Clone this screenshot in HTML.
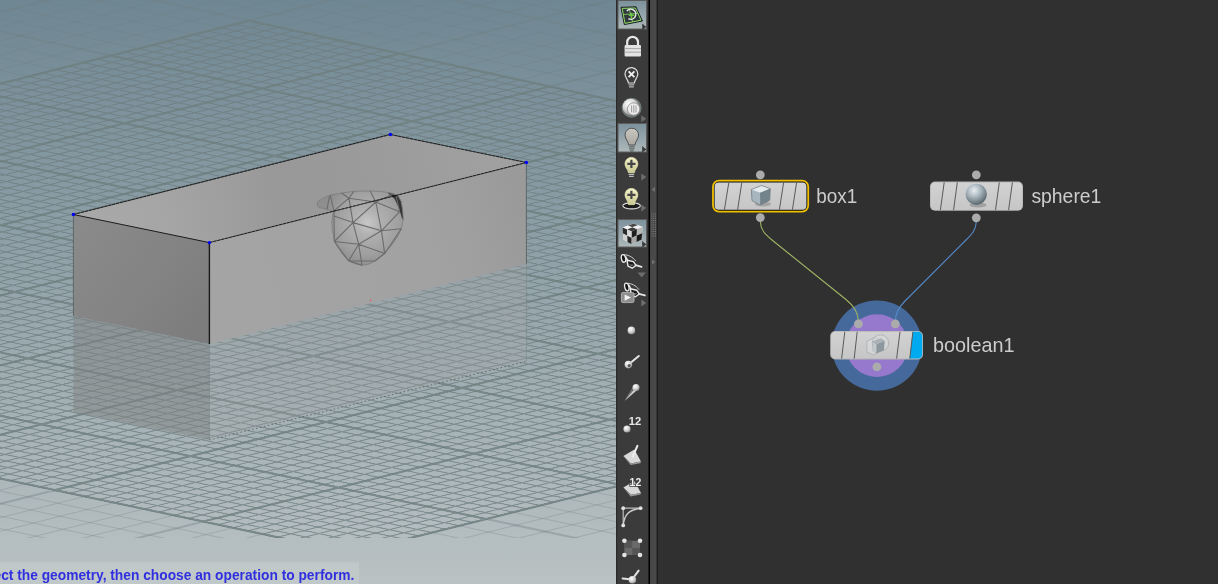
<!DOCTYPE html>
<html><head><meta charset="utf-8"><title>Houdini</title>
<style>
html,body{margin:0;padding:0;background:#303030;}
body{width:1218px;height:584px;overflow:hidden;position:relative;font-family:"Liberation Sans",sans-serif;}
svg{position:absolute;left:0;top:0;display:block}
text{font-family:"Liberation Sans",sans-serif;}
</style></head><body>
<svg width="1218" height="584" viewBox="0 0 1218 584">
<defs>
<linearGradient id="bg" x1="0" y1="0" x2="0" y2="1"><stop offset="0" stop-color="#6f8793"/><stop offset="1" stop-color="#bac2c3"/></linearGradient>
<filter id="idf" x="-0.05" y="-0.2" width="1.1" height="1.4"><feOffset dx="0" dy="0"/></filter>
<clipPath id="vp"><rect x="0" y="0" width="616" height="584"/></clipPath>
<clipPath id="gclip"><rect x="0" y="0" width="616" height="538"/></clipPath>
<clipPath id="outer" clip-rule="evenodd"><path clip-rule="evenodd" d="M0 0H616V538H0Z M-848.3 298.7L248.9 20.7L1437.3 280.8L351.2 552.8"/></clipPath>
<linearGradient id="fadeb" x1="0" y1="500" x2="0" y2="538" gradientUnits="userSpaceOnUse"><stop offset="0" stop-color="#fff"/><stop offset="1" stop-color="#000"/></linearGradient>
<linearGradient id="btn" x1="0" y1="0" x2="0" y2="1"><stop offset="0" stop-color="#7b919c"/><stop offset="1" stop-color="#aeb8ba"/></linearGradient>
<linearGradient id="topf" x1="73" y1="215" x2="480" y2="112" gradientUnits="userSpaceOnUse"><stop offset="0" stop-color="#a9a9a9"/><stop offset="0.22" stop-color="#a5a5a5"/><stop offset="0.5" stop-color="#989898"/><stop offset="0.72" stop-color="#9b9b9b"/><stop offset="1" stop-color="#a0a0a0"/></linearGradient>
<linearGradient id="leftf" x1="73" y1="230" x2="209" y2="330" gradientUnits="userSpaceOnUse"><stop offset="0" stop-color="#8a8a8a"/><stop offset="0.5" stop-color="#848484"/><stop offset="1" stop-color="#7c7c7c"/></linearGradient>
<linearGradient id="rightf" x1="209" y1="300" x2="526" y2="220" gradientUnits="userSpaceOnUse"><stop offset="0" stop-color="#a4a4a4"/><stop offset="0.7" stop-color="#a2a2a2"/><stop offset="1" stop-color="#9a9a9a"/></linearGradient>
<radialGradient id="sph" cx="367.5" cy="222.5" r="44" gradientUnits="userSpaceOnUse"><stop offset="0" stop-color="#c8c8c8"/><stop offset="0.3" stop-color="#b0b0b0"/><stop offset="0.7" stop-color="#a0a0a0"/><stop offset="1" stop-color="#8e8e8e"/></radialGradient>
</defs>

<g clip-path="url(#vp)">
<rect x="0" y="0" width="616" height="584" fill="url(#bg)"/>
<g clip-path="url(#gclip)"><g clip-path="url(#outer)" fill="none" stroke="#6f7f80">
<path stroke-opacity="0.3" stroke-width="1" d="M-4941.3 323.9L827.8 1479.7M-4935.7 337.5L377.2 -1038.2M-4914.1 316.8L853.8 1473.3M-4902.9 344L408.6 -1030.8M-4886.9 309.8L879.8 1467M-4870.2 350.6L440 -1023.5M-4859.7 302.8L905.8 1460.6M-4837.5 357.2L471.4 -1016.1M-4805.3 288.7L957.7 1447.9M-4772.1 370.2L534 -1001.5M-4778.1 281.6L983.7 1441.5M-4739.5 376.8L565.3 -994.1M-4750.9 274.5L1009.7 1435.2M-4706.9 383.3L596.6 -986.8M-4723.6 267.5L1035.7 1428.8M-4674.3 389.8L627.8 -979.5M-4669.1 253.4L1087.8 1416M-4609.2 402.8L690.2 -964.9M-4641.8 246.3L1113.8 1409.7M-4576.7 409.3L721.3 -957.6M-4614.6 239.2L1139.8 1403.3M-4544.2 415.8L752.4 -950.4M-4587.3 232.2L1165.9 1396.9M-4511.8 422.3L783.5 -943.1M-4532.7 218L1218 1384.2M-4447 435.3L845.6 -928.5M-4505.4 211L1244.1 1377.8M-4414.6 441.8L876.6 -921.3M-4478.1 203.9L1270.1 1371.4M-4382.3 448.3L907.6 -914M-4450.7 196.8L1296.2 1365M-4350 454.7L938.6 -906.8M-4396.1 182.7L1348.4 1352.2M-4285.4 467.7L1000.4 -892.3M-4368.7 175.6L1374.5 1345.8M-4253.2 474.1L1031.3 -885.1M-4341.4 168.5L1400.6 1339.4M-4221 480.5L1062.2 -877.9M-4314 161.4L1426.8 1333.1M-4188.8 487L1093 -870.7M-4259.2 147.2L1479 1320.3M-4124.6 499.9L1154.5 -856.3M-4231.9 140.1L1505.2 1313.9M-4092.5 506.3L1185.3 -849.1M-4204.5 133L1531.3 1307.5M-4060.4 512.7L1216 -841.9M-4177.1 125.9L1557.5 1301M-4028.4 519.1L1246.7 -834.7M-4122.2 111.7L1609.8 1288.2M-3964.4 531.9L1308 -820.3M-4094.8 104.6L1636 1281.8M-3932.4 538.3L1338.6 -813.2M-4067.3 97.5L1662.2 1275.4M-3900.5 544.7L1369.2 -806M-4039.9 90.4L1688.3 1269M-3868.6 551.1L1399.8 -798.9M-3985 76.2L1740.8 1256.2M-3804.9 563.9L1460.8 -784.6M-3957.5 69.1L1767 1249.8M-3773.1 570.2L1491.3 -777.4M-3930 61.9L1793.2 1243.3M-3741.3 576.6L1521.8 -770.3M-3902.5 54.8L1819.4 1236.9M-3709.5 582.9L1552.2 -763.2M-3847.5 40.6L1871.9 1224.1M-3646 595.7L1613 -749M-3820 33.5L1898.1 1217.6M-3614.3 602L1643.3 -741.9M-3792.5 26.3L1924.4 1211.2M-3582.7 608.3L1673.6 -734.8M-3765 19.2L1950.7 1204.8M-3551 614.7L1703.9 -727.7M-3709.9 4.9L2003.2 1191.9M-3487.8 627.3L1764.5 -713.5M-3682.3 -2.2L2029.5 1185.5M-3456.3 633.6L1794.7 -706.5M-3654.8 -9.4L2055.8 1179M-3424.7 639.9L1824.9 -699.4M-3627.2 -16.5L2082.1 1172.6M-3393.2 646.3L1855.1 -692.3M-3572 -30.8L2134.7 1159.7M-3330.3 658.9L1915.3 -678.2M-3544.4 -37.9L2161.1 1153.3M-3298.9 665.1L1945.4 -671.2M-3516.8 -45.1L2187.4 1146.8M-3267.5 671.4L1975.5 -664.1M-3489.2 -52.2L2213.7 1140.4M-3236.1 677.7L2005.5 -657.1M-3433.9 -66.5L2266.4 1127.5M-3173.4 690.3L2065.5 -643.1M-3406.3 -73.7L2292.8 1121M-3142.1 696.5L2095.5 -636.1M-3378.7 -80.9L2319.2 1114.6M-3110.8 702.8L2125.4 -629.1M-3351 -88L2345.5 1108.1M-3079.6 709L2155.3 -622.1M-3295.7 -102.4L2398.3 1095.2M-3017.2 721.5L2215.1 -608.1M-3268 -109.5L2424.7 1088.7M-2986 727.8L2244.9 -601.1M-3240.3 -116.7L2451.1 1082.3M-2954.9 734L2274.8 -594.1M-3212.6 -123.9L2477.5 1075.8M-2923.7 740.2L2304.5 -587.1M-3157.2 -138.2L2530.4 1062.9M-2861.6 752.7L2364 -573.2M-3129.5 -145.4L2556.8 1056.4M-2830.5 758.9L2393.8 -566.3M-3101.7 -152.6L2583.2 1049.9M-2799.5 765.1L2423.4 -559.3M-3074 -159.8L2609.7 1043.4M-2768.5 771.3L2453.1 -552.4M-3018.5 -174.2L2662.6 1030.5M-2706.6 783.7L2512.3 -538.5M-2990.7 -181.3L2689.1 1024M-2675.7 789.9L2541.9 -531.6M-2962.9 -188.5L2715.6 1017.5M-2644.8 796.1L2571.5 -524.7M-2935.2 -195.7L2742.1 1011M-2614 802.2L2601 -517.8M-2879.6 -210.1L2795.1 998M-2552.3 814.6L2660 -504M-2851.8 -217.3L2821.6 991.6M-2521.5 820.8L2689.5 -497.1M-2824 -224.5L2848.1 985.1M-2490.8 826.9L2718.9 -490.2M-2796.1 -231.7L2874.6 978.6M-2460 833.1L2748.3 -483.3M-2740.5 -246.2L2927.7 965.6M-2398.6 845.4L2807.1 -469.5M-2712.6 -253.4L2954.2 959.1M-2368 851.5L2836.4 -462.7M-2684.7 -260.6L2980.8 952.6M-2337.3 857.6L2865.7 -455.8M-2656.9 -267.8L3007.3 946.1M-2306.7 863.8L2895 -449M-2601.1 -282.3L3060.5 933.1M-2245.6 876L2953.5 -435.3M-2573.2 -289.5L3087.1 926.6M-2215 882.1L2982.7 -428.4M-2545.3 -296.7L3113.7 920M-2184.5 888.2L3011.9 -421.6M-2517.4 -303.9L3140.3 913.5M-2154 894.3L3041.1 -414.8M-2461.6 -318.4L3193.5 900.5M-2093.1 906.5L3099.4 -401.1M-2433.6 -325.6L3220.1 894M-2062.7 912.6L3128.5 -394.3M-2405.7 -332.9L3246.7 887.5M-2032.3 918.7L3157.5 -387.5M-2377.8 -340.1L3273.4 880.9M-2002 924.8L3186.6 -380.7M-2321.8 -354.6L3326.7 867.9M-1941.3 936.9L3244.6 -367.2M-2293.8 -361.8L3353.3 861.4M-1911 943L3273.5 -360.4M-2265.9 -369.1L3380 854.8M-1880.8 949L3302.5 -353.6M-2237.9 -376.3L3406.7 848.3M-1850.5 955.1L3331.4 -346.8M-2181.9 -390.8L3460 835.2M-1790.1 967.2L3389.2 -333.3M-2153.8 -398.1L3486.7 828.7M-1760 973.2L3418 -326.6M-2125.8 -405.4L3513.4 822.2M-1729.8 979.2L3446.9 -319.8M-2097.8 -412.6L3540.1 815.6M-1699.7 985.3L3475.7 -313.1M-2041.7 -427.2L3593.6 802.5M-1639.6 997.3L3533.2 -299.6M-2013.6 -434.4L3620.3 796M-1609.5 1003.3L3561.9 -292.9M-1985.5 -441.7L3647.1 789.5M-1579.5 1009.3L3590.6 -286.2M-1957.5 -449L3673.8 782.9M-1549.5 1015.3L3619.3 -279.5M-1901.3 -463.5L3727.3 769.8M-1489.6 1027.3L3676.6 -266.1M-1873.2 -470.8L3754.1 763.2M-1459.7 1033.3L3705.2 -259.4M-1845.1 -478.1L3780.9 756.7M-1429.8 1039.3L3733.8 -252.7M-1816.9 -485.4L3807.7 750.1M-1399.9 1045.3L3762.4 -246M-1760.7 -499.9L3861.3 737M-1340.2 1057.2L3819.4 -232.6M-1732.5 -507.2L3888.1 730.4M-1310.4 1063.2L3847.9 -226M-1704.4 -514.5L3914.9 723.9M-1280.6 1069.2L3876.4 -219.3M-1676.2 -521.8L3941.7 717.3M-1250.9 1075.1L3904.8 -212.7M-1619.8 -536.4L3995.4 704.2M-1191.5 1087L3961.6 -199.4M-1591.7 -543.7L4022.2 697.6M-1161.8 1092.9L3990 -192.7M-1563.5 -551L4049.1 691M-1132.1 1098.9L4018.4 -186.1M-1535.2 -558.3L4075.9 684.4M-1102.5 1104.8L4046.7 -179.5M-1478.8 -572.9L4129.7 671.3M-1043.3 1116.7L4103.3 -166.2M-1450.6 -580.3L4156.6 664.7M-1013.7 1122.6L4131.5 -159.6M-1422.3 -587.6L4183.5 658.1M-984.2 1128.5L4159.8 -153M-1394.1 -594.9L4210.4 651.5M-954.7 1134.4L4188 -146.4M-1337.5 -609.5L4264.2 638.4M-895.7 1146.2L4244.3 -133.2M-1309.3 -616.9L4291.1 631.8M-866.3 1152.1L4272.5 -126.6M-1281 -624.2L4318 625.2M-836.9 1158L4300.6 -120M-1252.7 -631.5L4345 618.6M-807.5 1163.9L4328.7 -113.5M-1196.1 -646.2L4398.9 605.4M-748.7 1175.6L4384.8 -100.3M-1167.8 -653.5L4425.8 598.8M-719.4 1181.5L4412.8 -93.8M-1139.4 -660.8L4452.8 592.2M-690.1 1187.4L4440.8 -87.2M-1111.1 -668.2L4479.8 585.6M-660.8 1193.2L4468.8 -80.7M-1054.4 -682.9L4533.8 572.4M-602.4 1204.9L4524.7 -67.6M-1026 -690.2L4560.8 565.7M-573.1 1210.8L4552.6 -61.1M-997.7 -697.6L4587.8 559.1M-544 1216.6L4580.5 -54.5M-969.3 -704.9L4614.8 552.5M-514.8 1222.5L4608.3 -48M-912.5 -719.6L4668.8 539.3M-456.5 1234.1L4664 -35M-884.1 -727L4695.9 532.7M-427.5 1239.9L4691.8 -28.5M-855.7 -734.3L4722.9 526M-398.4 1245.8L4719.6 -22M-827.2 -741.7L4750 519.4M-369.3 1251.6L4747.3 -15.5M-770.4 -756.4L4804.1 506.2M-311.3 1263.2L4802.7 -2.5M-741.9 -763.8L4831.2 499.5M-282.3 1269L4830.4 3.9M-713.4 -771.2L4858.3 492.9M-253.4 1274.8L4858.1 10.4M-685 -778.6L4885.4 486.3M-224.5 1280.6L4885.7 16.9M-628 -793.3L4939.6 473M-166.7 1292.1L4940.9 29.8M-599.5 -800.7L4966.7 466.4M-137.8 1297.9L4968.5 36.3M-571 -808.1L4993.8 459.7M-109 1303.7L4996 42.7M-542.5 -815.5L5020.9 453.1M-80.2 1309.5L5023.6 49.1M-485.5 -830.2L5075.2 439.8M-22.6 1321L5078.5 62M-456.9 -837.6L5102.4 433.1M6.1 1326.7L5106 68.4M-428.4 -845L5129.5 426.5M34.9 1332.5L5133.4 74.9M-399.8 -852.4L5156.7 419.8M63.6 1338.2L5160.8 81.3M-342.7 -867.2L5211.1 406.5M120.9 1349.7L5215.6 94.1M-314.1 -874.6L5238.2 399.9M149.5 1355.4L5242.9 100.5M-285.5 -882L5265.4 393.2M178.1 1361.2L5270.3 106.9M-256.9 -889.4L5292.7 386.6M206.7 1366.9L5297.6 113.3M-199.7 -904.3L5347.1 373.2M263.8 1378.3L5352.1 126M-171 -911.7L5374.3 366.6M292.4 1384L5379.3 132.4M-142.4 -919.1L5401.6 359.9M320.9 1389.7L5406.5 138.8M-113.8 -926.5L5428.8 353.2M349.3 1395.4L5433.7 145.1M-56.5 -941.3L5483.3 339.9M406.2 1406.8L5488.1 157.8M-27.8 -948.8L5510.6 333.2M434.6 1412.5L5515.2 164.2M0.9 -956.2L5537.9 326.5M463 1418.2L5542.3 170.5M29.6 -963.6L5565.1 319.8M491.4 1423.9L5569.4 176.9M87 -978.5L5619.7 306.5M548 1435.2L5623.5 189.5M115.7 -985.9L5647.1 299.8M576.3 1440.9L5650.5 195.8M144.4 -993.4L5674.4 293.1M604.6 1446.5L5677.5 202.2M173.2 -1000.8L5701.7 286.4M632.9 1452.2L5704.4 208.5M230.7 -1015.7L5756.4 273M689.3 1463.5L5758.3 221.1M259.4 -1023.2L5783.7 266.3M717.5 1469.1L5785.2 227.4M288.2 -1030.6L5811.1 259.6M745.6 1474.8L5812.1 233.7M317 -1038.1L5838.4 252.9M773.8 1480.4L5839 240"/>
<path stroke-opacity="0.38" stroke-width="2" d="M-4968.5 330.9L801.9 1486M-4968.5 330.9L345.7 -1045.5M-4832.5 295.7L931.7 1454.2M-4804.8 363.7L502.7 -1008.8M-4696.4 260.4L1061.7 1422.4M-4641.7 396.3L659 -972.2M-4560 225.1L1191.9 1390.5M-4479.4 428.8L814.6 -935.8M-4423.4 189.7L1322.3 1358.6M-4317.7 461.2L969.5 -899.6M-4286.6 154.3L1452.9 1326.7M-4156.7 493.4L1123.8 -863.5M-4149.6 118.8L1583.6 1294.6M-3996.4 525.5L1277.4 -827.5M-4012.4 83.3L1714.5 1262.6M-3836.7 557.5L1430.3 -791.7M-3875 47.7L1845.7 1230.5M-3677.7 589.3L1582.6 -756.1M-3737.4 12.1L1976.9 1198.3M-3519.4 621L1734.2 -720.6M-3599.6 -23.6L2108.4 1166.2M-3361.8 652.6L1885.2 -685.3M-3461.6 -59.4L2240.1 1133.9M-3204.7 684L2035.5 -650.1M-3323.3 -95.2L2371.9 1101.6M-3048.4 715.3L2185.2 -615.1M-3184.9 -131L2503.9 1069.3M-2892.7 746.5L2334.3 -580.2M-3046.2 -167L2636.2 1037M-2737.6 777.5L2482.7 -545.4M-2907.4 -202.9L2768.5 1004.5M-2583.1 808.4L2630.5 -510.9M-2768.3 -239L2901.1 972.1M-2429.3 839.2L2777.7 -476.4M-2629 -275L3033.9 939.6M-2276.1 869.9L2924.3 -442.1M-2489.5 -311.2L3166.9 907M-2123.6 900.4L3070.2 -408M-2349.8 -347.3L3300 874.4M-1971.6 930.8L3215.6 -373.9M-2209.9 -383.6L3433.3 841.8M-1820.3 961.1L3360.3 -340.1M-2069.7 -419.9L3566.8 809.1M-1669.6 991.3L3504.4 -306.4M-1929.4 -456.2L3700.6 776.4M-1519.5 1021.3L3648 -272.8M-1788.8 -492.7L3834.5 743.6M-1370.1 1051.3L3790.9 -239.3M-1648 -529.1L3968.5 710.7M-1221.2 1081.1L3933.2 -206M-1507 -565.6L4102.8 677.9M-1072.9 1110.7L4075 -172.8M-1365.8 -602.2L4237.3 644.9M-925.2 1140.3L4216.2 -139.8M-1224.4 -638.8L4371.9 612M-778.1 1169.8L4356.7 -106.9M-1082.7 -675.5L4506.8 579M-631.6 1199.1L4496.7 -74.1M-940.9 -712.3L4641.8 545.9M-485.7 1228.3L4636.2 -41.5M-798.8 -749.1L4777 512.8M-340.3 1257.4L4775 -9M-656.5 -785.9L4912.5 479.6M-195.6 1286.4L4913.3 23.3M-514 -822.8L5048.1 446.4M-51.4 1315.2L5051.1 55.6M-371.2 -859.8L5183.9 413.2M92.3 1344L5188.2 87.7M-228.3 -896.8L5319.9 379.9M235.3 1372.6L5324.8 119.6M-85.1 -933.9L5456.1 346.5M377.8 1401.1L5460.9 151.5M58.3 -971.1L5592.4 313.2M519.7 1429.5L5596.4 183.2M201.9 -1008.3L5729 279.7M661.1 1457.8L5731.4 214.8M345.7 -1045.5L5865.8 246.2M801.9 1486L5865.8 246.2"/>
</g></g>
<g clip-path="url(#gclip)" fill="none" stroke="#6f7f80" shape-rendering="crispEdges">
<path stroke-opacity="0.46" stroke-width="1" d="M-834.6 295.3L364.7 549.5M-833 301.9L264 24M-821 291.8L378.2 546.1M-817.8 305.2L279.1 27.3M-807.4 288.3L391.7 542.7M-802.6 308.4L294.2 30.6M-793.7 284.9L405.2 539.3M-787.4 311.6L309.3 33.9M-780.1 281.4L418.7 535.9M-772.1 314.8L324.3 37.2M-766.4 278L432.2 532.6M-756.9 318.1L339.4 40.5M-752.8 274.5L445.7 529.2M-741.7 321.3L354.5 43.8M-739.1 271.1L459.2 525.8M-726.5 324.5L369.5 47.1M-725.5 267.6L472.8 522.4M-711.3 327.7L384.6 50.4M-698.2 260.7L499.8 515.6M-681 334.2L414.7 57M-684.5 257.2L513.3 512.2M-665.8 337.4L429.7 60.2M-670.9 253.8L526.8 508.9M-650.7 340.6L444.7 63.5M-657.2 250.3L540.4 505.5M-635.5 343.8L459.7 66.8M-643.5 246.8L553.9 502.1M-620.3 347L474.8 70.1M-629.9 243.4L567.4 498.7M-605.2 350.2L489.8 73.4M-616.2 239.9L580.9 495.3M-590.1 353.4L504.8 76.7M-602.5 236.4L594.5 491.9M-574.9 356.6L519.8 80M-588.9 233L608 488.5M-559.8 359.8L534.7 83.2M-561.5 226L635.1 481.8M-529.6 366.2L564.7 89.8M-547.8 222.6L648.6 478.4M-514.5 369.4L579.7 93.1M-534.2 219.1L662.2 475M-499.4 372.6L594.6 96.4M-520.5 215.6L675.7 471.6M-484.3 375.8L609.6 99.6M-506.8 212.2L689.3 468.2M-469.2 379L624.5 102.9M-493.1 208.7L702.8 464.8M-454.1 382.2L639.5 106.2M-479.4 205.2L716.4 461.4M-439 385.4L654.4 109.4M-465.7 201.8L729.9 458M-423.9 388.6L669.3 112.7M-452 198.3L743.5 454.6M-408.9 391.8L684.3 116M-424.7 191.4L770.6 447.8M-378.8 398.2L714.1 122.5M-411 187.9L784.1 444.4M-363.7 401.4L729 125.8M-397.3 184.4L797.7 441M-348.7 404.6L743.9 129M-383.6 180.9L811.3 437.6M-333.7 407.7L758.8 132.3M-369.9 177.5L824.8 434.2M-318.6 410.9L773.7 135.6M-356.1 174L838.4 430.8M-303.6 414.1L788.6 138.8M-342.4 170.5L852 427.4M-288.6 417.3L803.5 142.1M-328.7 167L865.5 424M-273.6 420.5L818.3 145.3M-315 163.6L879.1 420.6M-258.6 423.6L833.2 148.6M-287.6 156.6L906.3 413.8M-228.6 430L862.9 155.1M-273.9 153.1L919.8 410.4M-213.6 433.2L877.7 158.3M-260.2 149.7L933.4 407M-198.6 436.4L892.6 161.6M-246.4 146.2L947 403.6M-183.7 439.5L907.4 164.8M-232.7 142.7L960.6 400.2M-168.7 442.7L922.2 168.1M-219 139.2L974.2 396.8M-153.7 445.9L937.1 171.3M-205.3 135.8L987.8 393.4M-138.8 449L951.9 174.6M-191.5 132.3L1001.4 390M-123.9 452.2L966.7 177.8M-177.8 128.8L1015 386.6M-108.9 455.4L981.5 181M-150.3 121.8L1042.1 379.8M-79 461.7L1011.1 187.5M-136.6 118.4L1055.7 376.4M-64.1 464.8L1025.8 190.8M-122.8 114.9L1069.3 373M-49.2 468L1040.6 194M-109.1 111.4L1082.9 369.6M-34.3 471.2L1055.4 197.2M-95.4 107.9L1096.6 366.2M-19.4 474.3L1070.2 200.5M-81.6 104.4L1110.2 362.8M-4.5 477.5L1084.9 203.7M-67.9 100.9L1123.8 359.4M10.4 480.6L1099.7 206.9M-54.1 97.5L1137.4 356M25.3 483.8L1114.4 210.2M-40.4 94L1151 352.6M40.2 486.9L1129.2 213.4M-12.8 87L1178.2 345.7M69.9 493.2L1158.6 219.8M0.9 83.5L1191.8 342.3M84.8 496.4L1173.3 223.1M14.7 80L1205.5 338.9M99.6 499.5L1188.1 226.3M28.4 76.5L1219.1 335.5M114.5 502.7L1202.8 229.5M42.2 73L1232.7 332.1M129.3 505.8L1217.5 232.7M56 69.6L1246.3 328.7M144.1 509L1232.2 235.9M69.7 66.1L1260 325.3M159 512.1L1246.9 239.2M83.5 62.6L1273.6 321.8M173.8 515.3L1261.6 242.4M97.3 59.1L1287.2 318.4M188.6 518.4L1276.2 245.6M124.8 52.1L1314.5 311.6M218.2 524.7L1305.6 252M138.6 48.6L1328.1 308.2M233 527.8L1320.2 255.2M152.4 45.1L1341.8 304.8M247.8 530.9L1334.9 258.4M166.2 41.6L1355.4 301.4M262.6 534.1L1349.5 261.6M180 38.1L1369.1 297.9M277.4 537.2L1364.2 264.8M193.7 34.6L1382.7 294.5M292.2 540.3L1378.8 268M207.5 31.1L1396.4 291.1M306.9 543.5L1393.5 271.2M221.3 27.7L1410 287.7M321.7 546.6L1408.1 274.4M235.1 24.2L1423.7 284.3M336.4 549.7L1422.7 277.6"/>
<path stroke-opacity="0.58" stroke-width="2" d="M-848.3 298.7L351.2 552.8M-848.3 298.7L248.9 20.7M-711.8 264.1L486.3 519M-696.2 330.9L399.6 53.7M-575.2 229.5L621.5 485.1M-544.7 363L549.7 86.5M-438.3 194.8L757 451.2M-393.8 395L699.2 119.2M-301.3 160.1L892.7 417.2M-243.6 426.8L848 151.8M-164.1 125.3L1028.5 383.2M-94 458.5L996.3 184.3M-26.6 90.5L1164.6 349.1M55 490.1L1143.9 216.6M111 55.6L1300.9 315M203.4 521.5L1290.9 248.8M248.9 20.7L1437.3 280.8M351.2 552.8L1437.3 280.8"/>
</g>
<g clip-path="url(#gclip)" fill="none" stroke="#6f7f80">
<path stroke-opacity="0.45" stroke-width="1.15" d="M-834.6 295.3L364.7 549.5M-833 301.9L264 24M-821 291.8L378.2 546.1M-817.8 305.2L279.1 27.3M-807.4 288.3L391.7 542.7M-802.6 308.4L294.2 30.6M-793.7 284.9L405.2 539.3M-787.4 311.6L309.3 33.9M-780.1 281.4L418.7 535.9M-772.1 314.8L324.3 37.2M-766.4 278L432.2 532.6M-756.9 318.1L339.4 40.5M-752.8 274.5L445.7 529.2M-741.7 321.3L354.5 43.8M-739.1 271.1L459.2 525.8M-726.5 324.5L369.5 47.1M-725.5 267.6L472.8 522.4M-711.3 327.7L384.6 50.4M-698.2 260.7L499.8 515.6M-681 334.2L414.7 57M-684.5 257.2L513.3 512.2M-665.8 337.4L429.7 60.2M-670.9 253.8L526.8 508.9M-650.7 340.6L444.7 63.5M-657.2 250.3L540.4 505.5M-635.5 343.8L459.7 66.8M-643.5 246.8L553.9 502.1M-620.3 347L474.8 70.1M-629.9 243.4L567.4 498.7M-605.2 350.2L489.8 73.4M-616.2 239.9L580.9 495.3M-590.1 353.4L504.8 76.7M-602.5 236.4L594.5 491.9M-574.9 356.6L519.8 80M-588.9 233L608 488.5M-559.8 359.8L534.7 83.2M-561.5 226L635.1 481.8M-529.6 366.2L564.7 89.8M-547.8 222.6L648.6 478.4M-514.5 369.4L579.7 93.1M-534.2 219.1L662.2 475M-499.4 372.6L594.6 96.4M-520.5 215.6L675.7 471.6M-484.3 375.8L609.6 99.6M-506.8 212.2L689.3 468.2M-469.2 379L624.5 102.9M-493.1 208.7L702.8 464.8M-454.1 382.2L639.5 106.2M-479.4 205.2L716.4 461.4M-439 385.4L654.4 109.4M-465.7 201.8L729.9 458M-423.9 388.6L669.3 112.7M-452 198.3L743.5 454.6M-408.9 391.8L684.3 116M-424.7 191.4L770.6 447.8M-378.8 398.2L714.1 122.5M-411 187.9L784.1 444.4M-363.7 401.4L729 125.8M-397.3 184.4L797.7 441M-348.7 404.6L743.9 129M-383.6 180.9L811.3 437.6M-333.7 407.7L758.8 132.3M-369.9 177.5L824.8 434.2M-318.6 410.9L773.7 135.6M-356.1 174L838.4 430.8M-303.6 414.1L788.6 138.8M-342.4 170.5L852 427.4M-288.6 417.3L803.5 142.1M-328.7 167L865.5 424M-273.6 420.5L818.3 145.3M-315 163.6L879.1 420.6M-258.6 423.6L833.2 148.6M-287.6 156.6L906.3 413.8M-228.6 430L862.9 155.1M-273.9 153.1L919.8 410.4M-213.6 433.2L877.7 158.3M-260.2 149.7L933.4 407M-198.6 436.4L892.6 161.6M-246.4 146.2L947 403.6M-183.7 439.5L907.4 164.8M-232.7 142.7L960.6 400.2M-168.7 442.7L922.2 168.1M-219 139.2L974.2 396.8M-153.7 445.9L937.1 171.3M-205.3 135.8L987.8 393.4M-138.8 449L951.9 174.6M-191.5 132.3L1001.4 390M-123.9 452.2L966.7 177.8M-177.8 128.8L1015 386.6M-108.9 455.4L981.5 181M-150.3 121.8L1042.1 379.8M-79 461.7L1011.1 187.5M-136.6 118.4L1055.7 376.4M-64.1 464.8L1025.8 190.8M-122.8 114.9L1069.3 373M-49.2 468L1040.6 194M-109.1 111.4L1082.9 369.6M-34.3 471.2L1055.4 197.2M-95.4 107.9L1096.6 366.2M-19.4 474.3L1070.2 200.5M-81.6 104.4L1110.2 362.8M-4.5 477.5L1084.9 203.7M-67.9 100.9L1123.8 359.4M10.4 480.6L1099.7 206.9M-54.1 97.5L1137.4 356M25.3 483.8L1114.4 210.2M-40.4 94L1151 352.6M40.2 486.9L1129.2 213.4M-12.8 87L1178.2 345.7M69.9 493.2L1158.6 219.8M0.9 83.5L1191.8 342.3M84.8 496.4L1173.3 223.1M14.7 80L1205.5 338.9M99.6 499.5L1188.1 226.3M28.4 76.5L1219.1 335.5M114.5 502.7L1202.8 229.5M42.2 73L1232.7 332.1M129.3 505.8L1217.5 232.7M56 69.6L1246.3 328.7M144.1 509L1232.2 235.9M69.7 66.1L1260 325.3M159 512.1L1246.9 239.2M83.5 62.6L1273.6 321.8M173.8 515.3L1261.6 242.4M97.3 59.1L1287.2 318.4M188.6 518.4L1276.2 245.6M124.8 52.1L1314.5 311.6M218.2 524.7L1305.6 252M138.6 48.6L1328.1 308.2M233 527.8L1320.2 255.2M152.4 45.1L1341.8 304.8M247.8 530.9L1334.9 258.4M166.2 41.6L1355.4 301.4M262.6 534.1L1349.5 261.6M180 38.1L1369.1 297.9M277.4 537.2L1364.2 264.8M193.7 34.6L1382.7 294.5M292.2 540.3L1378.8 268M207.5 31.1L1396.4 291.1M306.9 543.5L1393.5 271.2M221.3 27.7L1410 287.7M321.7 546.6L1408.1 274.4M235.1 24.2L1423.7 284.3M336.4 549.7L1422.7 277.6"/>
<path stroke-opacity="0.55" stroke-width="2.2" d="M-848.3 298.7L351.2 552.8M-848.3 298.7L248.9 20.7M-711.8 264.1L486.3 519M-696.2 330.9L399.6 53.7M-575.2 229.5L621.5 485.1M-544.7 363L549.7 86.5M-438.3 194.8L757 451.2M-393.8 395L699.2 119.2M-301.3 160.1L892.7 417.2M-243.6 426.8L848 151.8M-164.1 125.3L1028.5 383.2M-94 458.5L996.3 184.3M-26.6 90.5L1164.6 349.1M55 490.1L1143.9 216.6M111 55.6L1300.9 315M203.4 521.5L1290.9 248.8M248.9 20.7L1437.3 280.8M351.2 552.8L1437.3 280.8"/>
</g>
<polygon points="73.4,316 209.4,344.1 209.4,440 73.4,411.9" fill="#808282" fill-opacity="0.5"/>
<polygon points="209.4,344.1 526.4,264 526.4,361.4 209.4,440" fill="#a8a6a6" fill-opacity="0.27"/>
<path d="M526.4 264L526.4 361.4M209.4 344.1L209.4 440" stroke="#7d8a8c" stroke-width="1" stroke-opacity="0.7" fill="none"/>
<path d="M209.4 440L526.4 361.4" stroke="#4a5456" stroke-width="1" stroke-dasharray="1.5 2.5" stroke-opacity="0.75" fill="none"/>
<polygon points="73.4,214.5 390.4,134.5 526.4,162.5 209.4,242.6" fill="url(#topf)"/>
<polygon points="73.4,214.5 209.4,242.6 209.4,344.1 73.4,316" fill="url(#leftf)"/>
<polygon points="209.4,242.6 526.4,162.5 526.4,264 209.4,344.1" fill="url(#rightf)"/>
<path d="M317.2 202L322.9 198.2L330.2 195.1L341.6 193L353.8 191.4L370.1 190.9L383.1 191.7L392.1 193.3L397.8 195.9L401 201.2L402.6 210.1L403.3 219.1L401.3 228.8L396.9 237.8L390.4 246.7L383.1 254L375 261L368.5 264.3L362 265.3L354.6 263.6L348.1 260.4L342.4 254L337.5 246.7L334.3 239.4L332.3 230.4L331.9 222.3L332.7 215L334 210.9L326.2 209.3L317.7 206.9Z" fill="url(#sph)"/>
<path d="M387.2 192.4L393.7 193.7L398.6 196.3L401.3 201.2L402.8 210.1L403.3 219.9L402 218.2L399.1 208.5L394.5 198.7Z" fill="#262626" fill-opacity="0.88"/>
<path d="M317.2 202L322.9 198.2L330.2 195.1L341.6 193L353.8 191.4L370.1 190.9L383.1 191.7L392.1 193.3L397.8 195.9L401 201.2L402.6 210.1L403.3 219.1L401.3 228.8L396.9 237.8L390.4 246.7L383.1 254L375 261L368.5 264.3L362 265.3L354.6 263.6L348.1 260.4L342.4 254L337.5 246.7L334.3 239.4L332.3 230.4L331.9 222.3L332.7 215L334 210.9L326.2 209.3L317.7 206.9Z" fill="none" stroke="#808080" stroke-width="0.9"/>
<path d="M341.6 193L348.9 198.2M348.9 198.2L353.8 191.4M348.9 198.2L375.8 202M370.1 190.9L375.8 202M375.8 202L393.7 193.8M375.8 202L353 222.6M375.8 202L381.5 230.8M375.8 202L399.7 211.7M353 222.6L348.9 198.2M353 222.6L334 216.1M353 222.6L381.5 230.8M353 222.6L334.3 241.5M353 222.6L358.7 244.3M381.5 230.8L358.7 244.3M381.5 230.8L399.7 211.7M381.5 230.8L401.3 228.8M381.5 230.8L384.7 253.6M358.7 244.3L334.3 241.5M358.7 244.3L348.6 260.9M358.7 244.3L384.7 253.6M348.6 260.9L375 261M358.7 244.3L362 265.3M329.4 196.3L327 209.3M348.9 198.2L334 210.9M330.2 195.1L334 210.9M399.7 211.7L396.1 196.3M384.7 253.6L401.3 228.8M334.3 241.5L348.6 260.9M348.6 260.9L362 265.3M384.7 253.6L375 261M334 216.1L334.3 241.5M334 216.1L334 210.9" fill="none" stroke="#6c6c6c" stroke-width="1.1"/>
<path d="M73.4 214.5L390.4 134.5M390.4 134.5L526.4 162.5M209.4 242.6L526.4 162.5" stroke="#000" stroke-opacity="0.5" stroke-width="1" fill="none"/>
<path d="M73.4 214.5L390.4 134.5M390.4 134.5L526.4 162.5M209.4 242.6L526.4 162.5" stroke="#000" stroke-opacity="0.6" stroke-width="1" stroke-dasharray="3 1" fill="none"/>
<path d="M73.4 214.5L209.4 242.6" stroke="#1c1c1c" stroke-width="1" fill="none"/>
<path d="M209.4 242.6L209.4 344.1" stroke="#1a1a1a" stroke-width="1.4" fill="none"/>
<path d="M73.4 214.5L73.4 316M526.4 162.5L526.4 264" stroke="#5d6668" stroke-width="1" fill="none"/>
<circle cx="73.4" cy="214.5" r="1.7" fill="#0000ff"/>
<circle cx="390.4" cy="134.5" r="1.7" fill="#0000ff"/>
<circle cx="526.4" cy="162.5" r="1.7" fill="#0000ff"/>
<circle cx="209.4" cy="242.6" r="1.7" fill="#0000ff"/>
<path d="M370 299.5l1.6 1.6h-1.6z" fill="#ff3020"/>
<rect x="0" y="562.3" width="359" height="22" fill="#c6cecd" fill-opacity="0.55"/>
<text filter="url(#idf)" x="354.3" y="580" text-anchor="end" font-size="14.6" font-weight="bold" fill="#3030e0" textLength="381.5" lengthAdjust="spacingAndGlyphs">Select the geometry, then choose an operation to perform.</text>
</g>
<defs>
<radialGradient id="tball" cx="0.38" cy="0.32" r="0.75"><stop offset="0" stop-color="#ffffff"/><stop offset="0.5" stop-color="#d6d6d6"/><stop offset="1" stop-color="#8a8a8a"/></radialGradient>
<linearGradient id="bulbg" x1="0" y1="0" x2="0" y2="1"><stop offset="0" stop-color="#c9c7bf"/><stop offset="1" stop-color="#aaa8a0"/></linearGradient>
<linearGradient id="bulby" x1="0" y1="0" x2="0" y2="1"><stop offset="0" stop-color="#f3f3d0"/><stop offset="1" stop-color="#c8c88e"/></linearGradient>
</defs>
<g id="tb">
<rect x="616" y="0" width="33" height="584" fill="#3b3b3b"/>
<rect x="616" y="0" width="1.2" height="584" fill="#2a2a2a"/>
<rect x="648.5" y="0" width="1.6" height="584" fill="#000"/>
<rect x="650.1" y="0" width="6.6" height="584" fill="#484848"/>
<rect x="656.7" y="0" width="1.3" height="584" fill="#1e1e1e"/>
<!-- selected button backgrounds -->
<g stroke="#5c5c5c" stroke-width="1">
<rect x="618" y="0.5" width="28.5" height="28.5" fill="url(#btn)"/>
<rect x="618" y="123.5" width="28.5" height="28.5" fill="url(#btn)"/>
<rect x="618" y="219.5" width="28.5" height="27.5" fill="url(#btn)"/>
</g>
<!-- dropdown triangles -->
<g fill="#6e6e6e">
<path d="M642.2 23.5L646.4 27L642.2 30Z" fill="#3a3a3a"/>
<path d="M641.3 115.5L646.2 118.7L641.3 122Z"/>
<path d="M642.2 146L646.4 149.5L642.2 152.5Z" fill="#3a3a3a"/>
<path d="M641.3 173.6L646.2 177L641.3 180.4Z"/>
<path d="M641.3 204.6L646.2 208L641.3 211.4Z"/>
<path d="M642.2 241L646.4 244.5L642.2 247.5Z" fill="#3a3a3a"/>
<path d="M637.6 272.6H645.8L641.7 277.4Z"/>
<path d="M641.3 299.6L646.2 303L641.3 306.4Z"/>
</g>
<!-- 1: view/grid icon -->
<g>
<path d="M621 7.3L636 6.8L642.4 21L624.3 24.6Z" fill="#2e3a3c" stroke="#1d2424" stroke-width="1"/>
<path d="M622.2 8.4L635.4 8L641 20.2L625 23.4Z" fill="none" stroke="#8fd866" stroke-width="1"/>
<path d="M629 8.2L632.6 21.8M623.4 14.5L638 13.4" stroke="#8fd866" stroke-width="0.8" fill="none"/>
<path d="M626.8 11.2A5 5 0 1 1 628.4 18.6" fill="none" stroke="#ececec" stroke-width="1.4"/>
<path d="M631.5 12.8V18.4M628.8 15.2H634.4" stroke="#6cc043" stroke-width="1.5" fill="none"/>
</g>
<!-- 2: lock -->
<g>
<path d="M627.2 45V42.2A5.4 5.4 0 0 1 638 42.2V45" fill="none" stroke="#e6e6e6" stroke-width="2.2"/>
<rect x="624.6" y="45" width="16.4" height="11.4" rx="1" fill="#e2e2e2"/>
<path d="M624.6 48.6H641M624.6 52.2H641" stroke="#a6a6a6" stroke-width="1"/>
</g>
<!-- 3: bulb with X -->
<g>
<path d="M631.4 67.6A6.4 6.4 0 0 1 637.8 74C637.8 78 634.6 79.4 634.4 83H628.4C628.2 79.4 625 78 625 74A6.4 6.4 0 0 1 631.4 67.6Z" fill="#3d3d3d" stroke="#dcdcdc" stroke-width="1.2"/>
<path d="M628.6 71.4L634.4 77.2M634.4 71.4L628.6 77.2" stroke="#f2f2f2" stroke-width="1.8"/>
<path d="M628.6 84.8H634.2M629 86.8H633.8" stroke="#b8b8b8" stroke-width="1.2"/>
</g>
<!-- 4: round knob -->
<g>
<circle cx="631.6" cy="107.8" r="10" fill="#6f7777"/>
<circle cx="630.8" cy="107" r="8.2" fill="url(#tball)"/>
<circle cx="633.6" cy="109" r="6.2" fill="#ececec" stroke="#8e8e8e" stroke-width="0.8"/>
<path d="M631.6 105.6V112.4M633.8 105.2V112.8M636 105.6V112.4" stroke="#9a9a9a" stroke-width="1"/>
</g>
<!-- 5: bulb gray (selected) -->
<g>
<path d="M631.8 128.2A6.8 6.8 0 0 1 638.6 135C638.6 139.4 635.2 141 635 145H628.6C628.4 141 625 139.4 625 135A6.8 6.8 0 0 1 631.8 128.2Z" fill="url(#bulbg)" stroke="#4e5355" stroke-width="1"/>
<path d="M628.8 146.8H634.8M629.2 148.8H634.4M630 150.8H633.6" stroke="#5f6466" stroke-width="1.2"/>
</g>
<!-- 6: bulb yellow plus -->
<g>
<path d="M631.4 157.4A6.4 6.4 0 0 1 637.8 163.8C637.8 167.8 634.6 169.2 634.4 172.6H628.4C628.2 169.2 625 167.8 625 163.8A6.4 6.4 0 0 1 631.4 157.4Z" fill="url(#bulby)" stroke="#e8e6b0" stroke-width="0.8"/>
<path d="M631.4 159.8V168M627.3 163.9H635.5" stroke="#454545" stroke-width="2.2"/>
<path d="M628.6 174.4H634.2M629 176.4H633.8" stroke="#b8b8b8" stroke-width="1.2"/>
</g>
<!-- 7: bulb yellow plus with ring -->
<g>
<ellipse cx="631.6" cy="205.8" rx="8.8" ry="3.1" fill="#1a1a1a" stroke="#dedede" stroke-width="1.1"/>
<path d="M631.4 188.4A6.4 6.4 0 0 1 637.8 194.8C637.8 198.8 634.6 200.2 634.4 204.6H628.4C628.2 200.2 625 198.8 625 194.8A6.4 6.4 0 0 1 631.4 188.4Z" fill="url(#bulby)" stroke="#e8e6b0" stroke-width="0.8"/>
<path d="M631.4 190.8V199M627.3 194.9H635.5" stroke="#454545" stroke-width="2.2"/>
</g>
<!-- 8: checker cube -->
<g stroke-linejoin="round">
<path d="M622.6 227.4L633.6 223.4L642.6 227L641.6 239.6L631.6 244.2L623.2 239.6Z" fill="#e8e8e8"/>
<path d="M622.6 227.4L633.6 223.4L638.1 225.2L627.1 229.4Z" fill="#f4f4f4"/>
<path d="M628 225.4L632.5 227.3L638.1 225.2L633.6 223.4Z" fill="#4a4a4a"/>
<path d="M627.1 229.4L632.5 227.3L637 229.1L631.8 231.6Z" fill="#3c3c3c"/>
<path d="M637 229.1L642.6 227L638.1 225.2L632.5 227.3Z" fill="#f0f0f0"/>
<path d="M622.6 227.4L627.1 229.4L627.3 235.7L622.9 233.5Z" fill="#2c2c2c"/>
<path d="M627.1 229.4L631.8 231.6L631.7 237.9L627.3 235.7Z" fill="#d8d8d8"/>
<path d="M622.9 233.5L627.3 235.7L627.5 241.9L623.2 239.6Z" fill="#d0d0d0"/>
<path d="M627.3 235.7L631.7 237.9L631.6 244.2L627.5 241.9Z" fill="#262626"/>
<path d="M631.8 231.6L637 229.1L636.7 235.5L631.7 237.9Z" fill="#1e1e1e"/>
<path d="M637 229.1L642.6 227L642.1 233.3L636.7 235.5Z" fill="#b8b8b8"/>
<path d="M631.7 237.9L636.7 235.5L636.5 241.9L631.6 244.2Z" fill="#a8a8a8"/>
<path d="M636.7 235.5L642.1 233.3L641.6 239.6L636.5 241.9Z" fill="#1a1a1a"/>
</g>
<!-- 9: glasses -->
<g id="gl">
<path d="M624 254.8C628 254.6 632.6 257 635.8 261" fill="none" stroke="#d0d0d0" stroke-width="1"/>
<ellipse cx="623.5" cy="258.4" rx="2.1" ry="3.9" transform="rotate(-12 623.5 258.4)" fill="#161616" stroke="#ececec" stroke-width="1.3"/>
<path d="M625.4 256.2L627.6 260.4" stroke="#ececec" stroke-width="1.4" fill="none"/>
<path d="M627 260.2L633.4 261.6L636 265.4L632.2 268.2L628 266.2Z" fill="#1a1a1a" stroke="#ececec" stroke-width="1.4" stroke-linejoin="round"/>
<path d="M628.6 264.4L631.8 266.6L634 264.6Z" fill="#6e6e6e"/>
<path d="M635.6 265.2L641.6 266.8" stroke="#e6e6e6" stroke-width="1.8" stroke-linecap="round" fill="none"/>
</g>
<!-- 10: glasses + play -->
<g>
<use href="#gl" transform="translate(3.3 28.6)"/>
<rect x="621.4" y="292.4" width="12.6" height="10.2" rx="1.6" fill="#8e8e8e" stroke="#bdbdbd" stroke-width="0.8"/>
<path d="M624.6 294.4L631 297.5L624.6 300.8Z" fill="#f2f2f2"/>
</g>
<!-- 11: dot -->
<circle cx="631.4" cy="330.4" r="3.8" fill="url(#tball)"/>
<!-- 12: stick + ball -->
<g>
<path d="M628.8 364.2L638.8 356" stroke="#e6e6e6" stroke-width="2" stroke-linecap="round"/>
<circle cx="628.4" cy="364.6" r="3.8" fill="url(#tball)"/>
<circle cx="629.2" cy="365.4" r="1.5" fill="#555"/>
</g>
<!-- 13: cone + ball -->
<g>
<path d="M624.8 400.8L633.6 386.4L637.8 389.6Z" fill="#d0d0d0"/>
<path d="M624.8 400.8L633.6 386.4L635.4 388Z" fill="#6a6a6a"/>
<circle cx="636" cy="387.6" r="3.5" fill="url(#tball)"/>
</g>
<!-- 14: 12 + ball -->
<g>
<text filter="url(#idf)" x="628.8" y="425" font-size="11.4" font-weight="bold" fill="#e8e8e8" textLength="12.4" lengthAdjust="spacingAndGlyphs">12</text>
<circle cx="627" cy="429" r="3.6" fill="url(#tball)"/>
</g>
<!-- 15: plane + stick -->
<g>
<path d="M623.4 456L634.4 449.6L641 461.6L631 463.4Z" fill="#d9d9d9"/>
<path d="M623.4 456L631 463.4L641 461.6L640.4 463.2L630.6 465Z" fill="#9a9a9a"/>
<path d="M632.8 456.6L637.4 445.8" stroke="#ededed" stroke-width="2" stroke-linecap="round"/>
</g>
<!-- 16: plane + 12 -->
<g>
<path d="M623.4 487.4L634.4 481L641 493L631 494.8Z" fill="#d9d9d9"/>
<path d="M623.4 487.4L631 494.8L641 493L640.4 494.6L630.6 496.4Z" fill="#9a9a9a"/>
<text filter="url(#idf)" x="629.6" y="485.6" font-size="10.4" font-weight="bold" fill="#efefef" stroke="#3b3b3b" stroke-width="1.6" paint-order="stroke" textLength="11.6" lengthAdjust="spacingAndGlyphs">12</text>
</g>
<!-- 17: curve -->
<g>
<path d="M623.2 525.4V508.2H640.6" fill="none" stroke="#bdbdbd" stroke-width="1.2"/>
<path d="M623.2 525.4C624.4 514 629.6 509.6 640.6 508.2" fill="none" stroke="#cfcfcf" stroke-width="1.4"/>
<circle cx="623.2" cy="508.2" r="1.9" fill="#e2e2e2"/><circle cx="640.6" cy="508.2" r="1.9" fill="#e2e2e2"/><circle cx="623.2" cy="525.4" r="1.9" fill="#e2e2e2"/>
</g>
<!-- 18: four dots -->
<g>
<rect x="624.4" y="540.8" width="15.6" height="14.2" fill="#6a6a6a"/>
<rect x="624.4" y="540.8" width="7.8" height="7.1" fill="#565656"/><rect x="632.2" y="547.9" width="7.8" height="7.1" fill="#565656"/>
<circle cx="624.4" cy="540.8" r="2.3" fill="#e4e4e4"/><circle cx="640" cy="540.8" r="2.3" fill="#e4e4e4"/><circle cx="624.4" cy="555" r="2.3" fill="#e4e4e4"/><circle cx="640" cy="555" r="2.3" fill="#e4e4e4"/>
</g>
<!-- 19: joint -->
<g>
<path d="M632.2 579.4L638.6 570.6M632.2 579.4L622.6 578.4" stroke="#e2e2e2" stroke-width="2" stroke-linecap="round"/>
<circle cx="632.4" cy="579.8" r="3.8" fill="url(#tball)"/>
</g>
<!-- strip handles -->
<g fill="#6f6f6f">
<path d="M655 187L655 192L651.6 189.5Z"/>
<path d="M652 259.4L652 264.4L655.4 261.9Z"/>
</g>
<g fill="#7a7a7a"><rect x="651.4" y="213.4" width="1" height="1"/><rect x="653.2" y="213.4" width="1" height="1"/><rect x="655.0" y="213.4" width="1" height="1"/><rect x="651.4" y="215.6" width="1" height="1"/><rect x="653.2" y="215.6" width="1" height="1"/><rect x="655.0" y="215.6" width="1" height="1"/><rect x="651.4" y="217.8" width="1" height="1"/><rect x="653.2" y="217.8" width="1" height="1"/><rect x="655.0" y="217.8" width="1" height="1"/><rect x="651.4" y="220.0" width="1" height="1"/><rect x="653.2" y="220.0" width="1" height="1"/><rect x="655.0" y="220.0" width="1" height="1"/><rect x="651.4" y="222.2" width="1" height="1"/><rect x="653.2" y="222.2" width="1" height="1"/><rect x="655.0" y="222.2" width="1" height="1"/><rect x="651.4" y="224.4" width="1" height="1"/><rect x="653.2" y="224.4" width="1" height="1"/><rect x="655.0" y="224.4" width="1" height="1"/><rect x="651.4" y="226.6" width="1" height="1"/><rect x="653.2" y="226.6" width="1" height="1"/><rect x="655.0" y="226.6" width="1" height="1"/><rect x="651.4" y="228.8" width="1" height="1"/><rect x="653.2" y="228.8" width="1" height="1"/><rect x="655.0" y="228.8" width="1" height="1"/><rect x="651.4" y="231.0" width="1" height="1"/><rect x="653.2" y="231.0" width="1" height="1"/><rect x="655.0" y="231.0" width="1" height="1"/><rect x="651.4" y="233.2" width="1" height="1"/><rect x="653.2" y="233.2" width="1" height="1"/><rect x="655.0" y="233.2" width="1" height="1"/><rect x="651.4" y="235.4" width="1" height="1"/><rect x="653.2" y="235.4" width="1" height="1"/><rect x="655.0" y="235.4" width="1" height="1"/></g>
</g>

<defs>
<linearGradient id="nbody" x1="0" y1="0" x2="0" y2="1"><stop offset="0" stop-color="#d2d2d2"/><stop offset="1" stop-color="#c6c6c6"/></linearGradient>
<radialGradient id="ball" cx="0.4" cy="0.32" r="0.7"><stop offset="0" stop-color="#e8eef2"/><stop offset="0.45" stop-color="#a9b6bd"/><stop offset="1" stop-color="#56636b"/></radialGradient>
</defs>
<g id="net">
<!-- boolean rings -->
<circle cx="876.9" cy="345.6" r="45.2" fill="#46699b"/>
<circle cx="876.9" cy="345.6" r="31.3" fill="#9678cd"/>
<!-- wires -->
<path d="M760.3 218V221.5C760.6 230 765 234.2 772 240L846 299.5C853 305.2 858 311 858.3 320V322" fill="none" stroke="#9cb263" stroke-width="1.15"/>
<path d="M976.3 218V221.5C976 230 972 234 966 240L905 301C899 307 895.8 312 895.4 320V322" fill="none" stroke="#5688c6" stroke-width="1.15"/>
<!-- box1 -->
<rect x="713" y="180.6" width="95.2" height="31" rx="6" fill="#0a0a0a" stroke="#f0c000" stroke-width="1.8"/>
<rect x="714.6" y="182.6" width="91.8" height="27.2" rx="4" fill="url(#nbody)"/>
<path d="M728.8 182.6L724.4 209.8M741.8 182.6L737.6 209.8M783.6 182.6L779.4 209.8M796.6 182.6L792.4 209.8" stroke="#5a5a5a" stroke-width="1" fill="none"/>
<g>
<ellipse cx="763" cy="204" rx="8" ry="2.5" fill="#808080" fill-opacity="0.5"/>
<path d="M751.3 189.5L761.6 185.5L770.3 188.6L760 192.8Z" fill="#e4eaed"/>
<path d="M751.3 189.5L760 192.8L760.2 205L752 200.6Z" fill="#a8b7bf"/>
<path d="M760 192.8L770.3 188.6L769.7 200.3L760.2 205Z" fill="#73838c"/>
<path d="M751.3 189.5L761.6 185.5L770.3 188.6L769.7 200.3L760.2 205L752 200.6Z" fill="none" stroke="#68757c" stroke-width="0.7" stroke-linejoin="round"/>
</g>
<!-- sphere1 -->
<rect x="930" y="181.6" width="93" height="29.2" rx="5" fill="#b4b4b4"/>
<rect x="930.8" y="182.4" width="91.4" height="27.6" rx="4.2" fill="url(#nbody)"/>
<path d="M944.2 182.4L940.4 210M957.3 182.4L953.6 210M999.3 182.4L995.5 210M1012.4 182.4L1008.6 210" stroke="#5a5a5a" stroke-width="1" fill="none"/>
<ellipse cx="978" cy="205" rx="8.5" ry="2.4" fill="#7a7a7a" fill-opacity="0.5"/>
<circle cx="976.3" cy="194.3" r="10.6" fill="url(#ball)"/>
<!-- boolean1 -->
<rect x="830.2" y="331" width="92.8" height="28.4" rx="5" fill="#b4b4b4"/>
<rect x="831" y="331.8" width="91.2" height="26.8" rx="4.2" fill="url(#nbody)"/>
<path d="M912.6 331.8H918A4.2 4.2 0 0 1 922.2 336V354.4A4.2 4.2 0 0 1 918 358.6H909.6Z" fill="#00aaf0"/>
<path d="M844.8 331.8L841.6 358.6M857.2 331.8L854.2 358.6M900 331.8L896.6 358.6M912.9 331.8L909.8 358.6" stroke="#5a5a5a" stroke-width="1" fill="none"/>
<g fill="none" stroke="#a9aeb1" stroke-width="0.8">
<path d="M866.8 341.5L874 337.5L880.5 340.5V351L873.5 355L866.8 352Z" fill="#d9dcde" fill-opacity="0.6"/>
<circle cx="880.5" cy="343" r="8.2" fill="#e0e2e4" fill-opacity="0.35"/>
</g>
<path d="M872.8 341.5L880.8 338.6L884.6 341L884 350.3L876.3 353.6L872.6 350.6Z" fill="#8d989e"/>
<path d="M872.8 341.5L876.6 344.4L876.3 353.6L872.6 350.6Z" fill="#c3cacd"/>
<path d="M872.8 341.5L880.8 338.6L884.6 341L876.6 344.4Z" fill="#aab3b8"/>
<!-- connectors -->
<g fill="#ababab">
<circle cx="760.3" cy="174.8" r="4.4"/><circle cx="760.3" cy="217.6" r="4.4"/>
<circle cx="976.3" cy="174.8" r="4.4"/><circle cx="976.3" cy="217.8" r="4.4"/>
<circle cx="858.4" cy="323.9" r="4.4"/><circle cx="895.3" cy="323.9" r="4.4"/><circle cx="876.9" cy="366.9" r="4.4"/>
</g>
<g fill="#cccccc" font-size="20.5" filter="url(#idf)">
<text x="816.2" y="202.9" textLength="41" lengthAdjust="spacingAndGlyphs">box1</text>
<text x="1031.4" y="203" textLength="70" lengthAdjust="spacingAndGlyphs">sphere1</text>
<text x="933" y="351.6" textLength="81.5" lengthAdjust="spacingAndGlyphs">boolean1</text>
</g>
</g>

</svg></body></html>
